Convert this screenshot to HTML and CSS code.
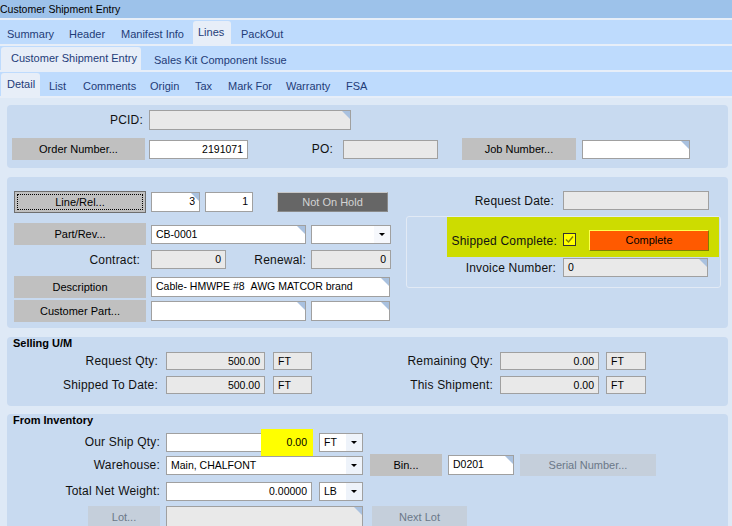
FILE: index.html
```html
<!DOCTYPE html>
<html lang="en">
<head>
    <meta charset="UTF-8">
    <title>Customer Shipment Entry</title>
    <link rel="stylesheet" href="styles.css">
</head>
<body>
<div class="titlebar">Customer Shipment Entry</div>

<div class="tabbar">
    <span class="tab tab-summary">Summary</span>
    <span class="tab tab-header">Header</span>
    <span class="tab tab-manifest">Manifest Info</span>
    <span class="tab on tab-lines">Lines</span>
    <span class="tab tab-packout">PackOut</span>
</div>
<div class="tabbar">
    <span class="tab on tab-cse">Customer Shipment Entry</span>
    <span class="tab tab-kit">Sales Kit Component Issue</span>
</div>
<div class="tabbar last">
    <span class="tab on tab-detail">Detail</span>
    <span class="tab tab-list">List</span>
    <span class="tab tab-comments">Comments</span>
    <span class="tab tab-origin">Origin</span>
    <span class="tab tab-tax">Tax</span>
    <span class="tab tab-markfor">Mark For</span>
    <span class="tab tab-warranty">Warranty</span>
    <span class="tab">FSA</span>
</div>

<div class="content">
    <!-- order header -->
    <div class="panel panel-order">
        <div class="row">
            <span class="lbl lbl-pcid">PCID:</span>
            <div class="fld ro corner w-pcid"></div>
        </div>
        <div class="row row-2">
            <div class="btn btn-order">Order Number...</div>
            <div class="fld num w-order">2191071</div>
            <span class="lbl lbl-po">PO:</span>
            <div class="fld ro w-po"></div>
            <div class="btn btn-job">Job Number...</div>
            <div class="fld corner w-job"></div>
        </div>
    </div>

    <!-- line / part -->
    <div class="panel panel-line">
        <div class="col-left">
            <div class="row">
                <div class="btn btn-side focus">Line/Rel...</div>
                <div class="fld num corner w-line">3</div>
                <div class="fld num w-rel">1</div>
                <div class="btn btn-hold">Not On Hold</div>
            </div>
            <div class="row row-part">
                <div class="btn btn-side">Part/Rev...</div>
                <div class="fld corner w-part">CB-0001</div>
                <div class="fld sel w-rev"><span class="sel-text"></span><span class="arrow"></span></div>
            </div>
            <div class="row row-contract">
                <span class="lbl lbl-contract">Contract:</span>
                <div class="fld ro num w-contract">0</div>
                <span class="lbl lbl-renewal">Renewal:</span>
                <div class="fld ro num w-renewal">0</div>
            </div>
            <div class="row row-desc">
                <div class="btn btn-side">Description</div>
                <div class="fld corner w-desc">Cable- HMWPE #8 &nbsp;AWG MATCOR brand</div>
            </div>
            <div class="row row-cust">
                <div class="btn btn-side">Customer Part...</div>
                <div class="fld corner w-part"></div>
                <div class="fld corner w-custrev"></div>
            </div>
        </div>
        <div class="col-right">
            <div class="row row-reqdate">
                <span class="lbl lbl-reqdate">Request Date:</span>
                <div class="fld ro w-reqdate"></div>
            </div>
            <div class="group">
                <div class="hilite">
                    <span class="lbl lbl-shipped">Shipped Complete:</span>
                    <span class="check">
                        <svg width="11" height="11" viewBox="0 0 11 11"><path d="M2 5.5 L4.5 8 L9 2.5" fill="none" stroke="#7d7d00" stroke-width="1.4"/></svg>
                    </span>
                    <div class="btn btn-complete">Complete</div>
                </div>
                <div class="row row-invoice">
                    <span class="lbl lbl-invoice">Invoice Number:</span>
                    <div class="fld ro corner w-invoice">0</div>
                </div>
            </div>
        </div>
    </div>

    <!-- selling unit of measure -->
    <div class="panel panel-uom">
        <div class="sec-title">Selling U/M</div>
        <div class="row row-qty">
            <span class="lbl lbl-qty">Request Qty:</span>
            <div class="fld ro num w-qty">500.00</div>
            <div class="fld ro w-um">FT</div>
            <span class="lbl lbl-qty-r">Remaining Qty:</span>
            <div class="fld ro num w-qty-r">0.00</div>
            <div class="fld ro w-um-r">FT</div>
        </div>
        <div class="row row-qty row-qty2">
            <span class="lbl lbl-qty">Shipped To Date:</span>
            <div class="fld ro num w-qty">500.00</div>
            <div class="fld ro w-um">FT</div>
            <span class="lbl lbl-qty-r">This Shipment:</span>
            <div class="fld ro num w-qty-r">0.00</div>
            <div class="fld ro w-um-r">FT</div>
        </div>
    </div>

    <!-- from inventory -->
    <div class="panel panel-inv">
        <div class="sec-title">From Inventory</div>
        <div class="row row-inv row-inv1">
            <span class="lbl lbl-inv">Our Ship Qty:</span>
            <div class="fld num w-ship"><span class="marker"></span><span class="val">0.00</span></div>
            <div class="fld sel w-unit"><span class="sel-text">FT</span><span class="arrow"></span></div>
        </div>
        <div class="row row-inv row-inv2">
            <span class="lbl lbl-inv">Warehouse:</span>
            <div class="fld sel w-whse"><span class="sel-text">Main, CHALFONT</span><span class="arrow"></span></div>
            <div class="btn btn-bin">Bin...</div>
            <div class="fld corner w-bin">D0201</div>
            <div class="btn off btn-serial">Serial Number...</div>
        </div>
        <div class="row row-inv">
            <span class="lbl lbl-inv">Total Net Weight:</span>
            <div class="fld num w-ship">0.00000</div>
            <div class="fld sel w-unit"><span class="sel-text">LB</span><span class="arrow"></span></div>
        </div>
        <div class="row row-inv">
            <div class="btn off btn-lot">Lot...</div>
            <div class="fld ro corner w-lot"></div>
            <div class="btn off btn-nextlot">Next Lot</div>
        </div>
    </div>
</div>
</body>
</html>
```

FILE: styles.css
```css
* {
    box-sizing: border-box;
}

body {
    margin: 0;
    width: 732px;
    height: 526px;
    overflow: hidden;
    background-color: #dee9f6;
    color: #000;
    font-family: "Liberation Sans", Arial, sans-serif;
    font-size: 11px;
}

.titlebar {
    height: 18px;
    line-height: 18px;
    font-size: 10.5px;
    background-color: #9dc2ea;
}

/* tab strips */
.tabbar {
    display: flex;
    height: 26px;
    background-color: #bedbfd;
    border-top: 2px solid #e7eef8;
    color: #1e3c78;
}

.tabbar.last {
    height: 28px;
    border-bottom: 2px solid #e7eef8;
}

.tab {
    height: 24px;
    padding-top: 7px;
    line-height: 14px;
    white-space: nowrap;
}

.tab.on {
    height: 23px;
    margin-top: 1px;
    padding-top: 4px;
    background-color: #e7eef8;
    border-radius: 3px 3px 0 0;
}

.tab-summary { width: 62px; margin-left: 7px; }
.tab-header { width: 52px; }
.tab-manifest { width: 72px; }
.tab-lines { width: 38px; padding-left: 5px; }
.tab-packout { margin-left: 10px; }

.tab-cse { width: 140px; margin-left: 1px; padding-left: 10px; }
.tab-kit { margin-left: 13px; }

.tab-detail { width: 39px; margin-left: 1px; padding-left: 6px; }
.tab-list { width: 34px; margin-left: 9px; }
.tab-comments { width: 67px; }
.tab-origin { width: 45px; }
.tab-tax { width: 33px; }
.tab-markfor { width: 58px; }
.tab-warranty { width: 60px; }

/* panels */
.content {
    padding: 7px 0 0 7px;
}

.panel {
    width: 721px;
    background-color: #c8daf0;
    border-radius: 4px;
    margin-bottom: 9px;
}

.row {
    display: flex;
    align-items: center;
}

.lbl {
    flex: none;
    text-align: right;
    white-space: nowrap;
    font-size: 12px;
    letter-spacing: 0.2px;
    color: #111;
}

.fld {
    flex: none;
    position: relative;
    height: 19px;
    line-height: 17px;
    padding: 0 4px;
    font-size: 10.5px;
    background-color: #fff;
    border: 1px solid #a0a0a0;
    white-space: nowrap;
    overflow: hidden;
}

.fld.ro {
    background-color: #e9e9e9;
}

.fld.num {
    text-align: right;
}

.corner::after {
    content: "";
    position: absolute;
    top: 0;
    right: 0;
    border-style: solid;
    border-width: 0 8px 8px 0;
    border-color: transparent #a9c1df transparent transparent;
}

.sel {
    display: flex;
    padding-right: 0;
}

.sel-text {
    flex: 1;
}

.arrow {
    width: 16px;
    background-color: #eef3fa;
    position: relative;
}

.arrow::after {
    content: "";
    position: absolute;
    left: 5px;
    top: 7px;
    border-style: solid;
    border-width: 3px 3px 0 3px;
    border-color: #000 transparent transparent transparent;
}

.btn {
    flex: none;
    height: 22px;
    line-height: 22px;
    text-align: center;
    background-color: #c0c0c0;
    white-space: nowrap;
}

.btn.off {
    background-color: #c5cfdb;
    color: #6b7888;
}

/* order header */
.panel-order {
    padding: 5px 0 8px;
}

.lbl-pcid { width: 136px; }
.w-pcid { width: 202px; margin-left: 6px; height: 20px; }

.row-2 { margin-top: 8px; }
.btn-order { width: 133px; margin-left: 5px; }
.w-order { width: 99px; margin-left: 4px; }
.lbl-po { width: 85px; }
.w-po { width: 95px; margin-left: 10px; }
.btn-job { width: 114px; margin-left: 24px; }
.w-job { width: 108px; margin-left: 6px; }

/* line / part */
.panel-line {
    display: flex;
    height: 151px;
    padding-top: 14px;
}

.col-left {
    width: 399px;
    padding-left: 7px;
}

.btn-side { width: 132px; }

.btn.focus {
    line-height: 20px;
    border: 1px solid #6e6e6e;
    outline: 1px dotted #000;
    outline-offset: -4px;
}

.w-line { width: 49px; margin-left: 5px; height: 20px; }
.w-rel { width: 48px; margin-left: 5px; height: 20px; }

.btn-hold {
    width: 111px;
    height: 20px;
    line-height: 18px;
    margin-left: 24px;
    background-color: #666;
    color: #d4d4d4;
    border: 1px solid;
    border-color: #c8c8c8 #8a8a8a #8a8a8a #c8c8c8;
}

.row-part { margin-top: 10px; }
.w-part { width: 155px; margin-left: 5px; }
.w-rev { width: 80px; margin-left: 5px; }
.w-rev .arrow { background-color: #f6f8fc; }

.row-contract { margin-top: 5px; }
.lbl-contract { width: 126px; }
.w-contract { width: 75px; margin-left: 11px; }
.lbl-renewal { width: 80px; }
.w-renewal { width: 80px; margin-left: 5px; }

.row-desc { margin-top: 7px; }
.w-desc { width: 239px; margin-left: 5px; height: 20px; }

.row-cust { margin-top: 2px; }
.w-custrev { width: 79px; margin-left: 5px; height: 20px; }
.row-cust .w-part { height: 20px; }

.col-right {
    width: 315px;
}

.lbl-reqdate { width: 148px; }
.w-reqdate { width: 146px; margin-left: 9px; }

.group {
    height: 72px;
    margin-top: 6px;
    border: 1px solid #e2eaf5;
    border-radius: 3px;
}

.hilite {
    display: flex;
    align-items: center;
    height: 40px;
    margin: 0 1px 0 40px;
    padding-top: 7px;
    background-color: #cddc00;
}

.lbl-shipped { width: 110px; }

.check {
    flex: none;
    width: 13px;
    height: 13px;
    margin: -2px 0 0 6px;
    background-color: #ffff00;
    border: 1px solid #333;
}

.check svg {
    display: block;
}

.btn-complete {
    width: 120px;
    height: 21px;
    line-height: 19px;
    margin-left: 13px;
    background-color: #ff5a00;
    border: 1px solid;
    border-color: #ffff50 #808000 #808000 #ffff50;
}

.row-invoice { margin-top: 1px; }
.lbl-invoice { width: 149px; }
.w-invoice { width: 145px; margin-left: 7px; }

/* selling u/m */
.sec-title {
    height: 13px;
    line-height: 13px;
    padding-left: 6px;
    font-weight: bold;
}

.panel-uom {
    height: 69px;
    margin-bottom: 8px;
}

.row-qty { margin-top: 2px; }
.row-qty2 { margin-top: 6px; }
.row-qty .fld { height: 18px; line-height: 16px; }
.lbl-qty { width: 151px; }
.w-qty { width: 99px; margin-left: 8px; }
.w-um { width: 39px; margin-left: 8px; }
.lbl-qty-r { width: 181px; }
.w-qty-r { width: 99px; margin-left: 7px; }
.w-um-r { width: 40px; margin-left: 7px; }

/* from inventory */
.panel-inv {
    height: 120px;
}

.row-inv { height: 22px; margin-top: 4px; }
.row-inv2 { margin-top: 1px; }
.lbl-inv { width: 153px; }

.w-ship { width: 146px; margin-left: 6px; overflow: visible; }
.w-unit { width: 44px; margin-left: 7px; }
.w-whse { width: 197px; margin-left: 6px; }

.marker {
    position: absolute;
    left: 94px;
    top: -5px;
    width: 52px;
    height: 28px;
    background-color: #ffff00;
}

.val {
    position: relative;
}

.btn-bin { width: 72px; margin-left: 7px; }
.w-bin { width: 66px; margin-left: 6px; height: 20px; }
.btn-serial { width: 136px; margin-left: 6px; }

.btn-lot { width: 72px; margin-left: 81px; }
.w-lot { width: 197px; margin-left: 6px; height: 22px; }
.btn-nextlot { width: 95px; margin-left: 9px; }
```
